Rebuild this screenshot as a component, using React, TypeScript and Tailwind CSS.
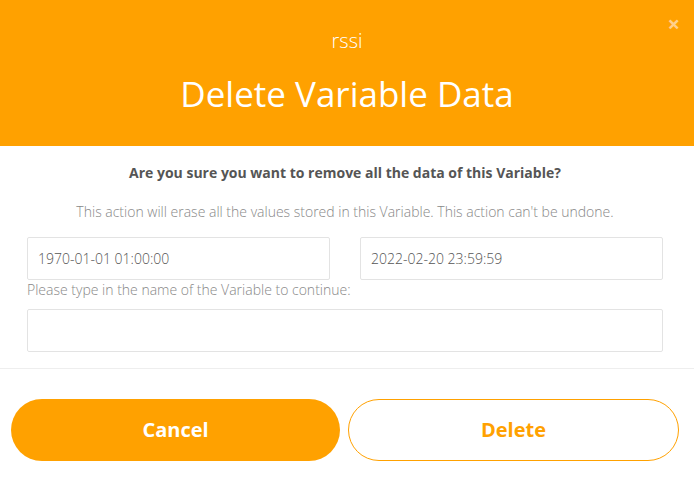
import React, { useState } from 'react';

export default function App() {
  const [name, setName] = useState('');

  return (
    <div className="w-[694px] h-[489px] bg-white overflow-hidden" style={{ fontFamily: '"Open Sans", sans-serif' }}>
      {/* Header */}
      <div className="relative h-[146px] bg-[#ffa100] flex flex-col items-center text-white">
        <button className="absolute top-[12px] right-[14px] text-[#ffd08a] text-[22px] font-bold leading-none">×</button>
        <p className="mt-[28px] text-[20px] font-light leading-[26px]">rssi</p>
        <h1 className="mt-[18px] text-[35px] font-normal leading-[44px]">Delete Variable Data</h1>
      </div>

      {/* Body */}
      <div className="pl-[27px] pr-[31px] pt-[17px] pb-[16px] border-b border-[#eeeeee]">
        <p className="text-center text-[14px] font-bold text-[#555555] leading-[20px]">
          Are you sure you want to remove all the data of this Variable?
        </p>
        <p className="mt-[19px] text-center text-[14px] font-light text-[#888888] leading-[20px]">
          This action will erase all the values stored in this Variable. This action can't be undone.
        </p>
        <div className="mt-[15px] flex gap-[30px]">
          <input
            readOnly
            value="1970-01-01 01:00:00"
            className="flex-1 min-w-0 h-[43px] border border-[#e3e3e3] rounded-[2px] px-[10px] text-[14px] font-light text-[#555555] outline-none"
          />
          <input
            readOnly
            value="2022-02-20 23:59:59"
            className="flex-1 min-w-0 h-[43px] border border-[#e3e3e3] rounded-[2px] px-[10px] text-[14px] font-light text-[#555555] outline-none"
          />
        </div>
        <label className="block text-[14px] font-light text-[#888888] leading-[20px]">
          Please type in the name of the Variable to continue:
        </label>
        <input
          value={name}
          onChange={(e) => setName(e.target.value)}
          className="mt-[9px] w-full h-[43px] border border-[#e3e3e3] rounded-[2px] px-[10px] text-[14px] text-[#555555] outline-none"
        />
      </div>

      {/* Footer */}
      <div className="flex gap-[8px] pl-[11px] pr-[15px] pt-[30px]">
        <button className="flex-1 h-[62px] rounded-full bg-[#ffa100] text-white text-[20px] font-bold">Cancel</button>
        <button className="flex-1 h-[62px] rounded-full border border-[#ffa100] bg-white text-[#ffa100] text-[20px] font-bold">
          Delete
        </button>
      </div>
    </div>
  );
}
